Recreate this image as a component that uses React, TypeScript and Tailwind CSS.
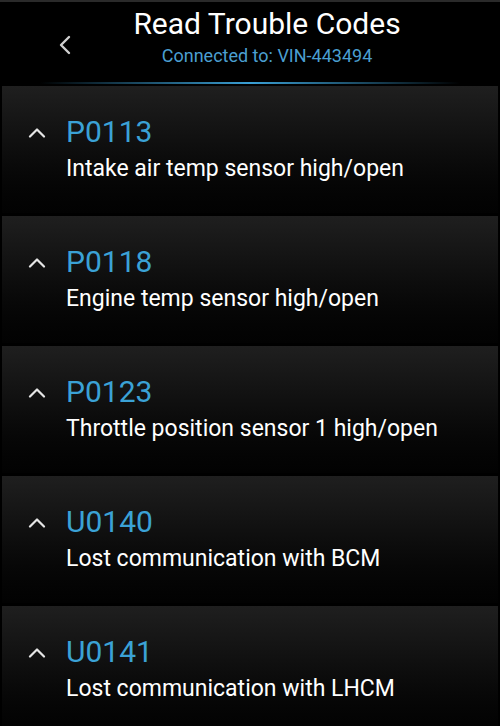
import React from "react";

interface Code {
  code: string;
  desc: string;
}

const codes: Code[] = [
  { code: "P0113", desc: "Intake air temp sensor high/open" },
  { code: "P0118", desc: "Engine temp sensor high/open" },
  { code: "P0123", desc: "Throttle position sensor 1 high/open" },
  { code: "U0140", desc: "Lost communication with BCM" },
  { code: "U0141", desc: "Lost communication with LHCM" },
];

const ChevronUp = () => (
  <svg width="18" height="10" viewBox="0 0 18 10" fill="none">
    <path d="M2 8.5 L9 1.5 L16 8.5" stroke="#e6e6e6" strokeWidth="2.2" strokeLinecap="round" strokeLinejoin="round" />
  </svg>
);

const CodeCard = ({ code, desc }: Code) => {
  return (
    <div className="mx-[2px] mb-[3px] h-[127px] bg-gradient-to-b from-[#1f1f1f] to-[#020202] pt-[29px]">
      <div className="flex items-center">
        <div className="flex w-[64px] justify-end pr-[20px] pt-[2px]">
          <ChevronUp />
        </div>
        <div className="text-[30px] leading-[34px] text-[#3ba2d6]">{code}</div>
      </div>
      <div className="pl-[64px] pt-[6px] text-[23px] leading-[27px] text-white">{desc}</div>
    </div>
  );
};

const App = () => {
  return (
    <div className="h-[726px] w-[500px] overflow-hidden bg-black" style={{ fontFamily: "Roboto, 'Noto Sans', sans-serif" }}>
      <div className="h-[2px] bg-[#2a2a2a]" />
      <div className="relative flex h-[80px] flex-col items-center pl-[34px]">
        <div className="absolute left-[58px] top-[33px]">
          <svg width="14" height="20" viewBox="0 0 14 20" fill="none">
            <path d="M11 2 L3 10 L11 18" stroke="#d0d0d0" strokeWidth="2.4" strokeLinecap="round" strokeLinejoin="round" />
          </svg>
        </div>
        <div className="pt-[4px] text-[30px] leading-[36px] text-white">Read Trouble Codes</div>
        <div className="pt-[3px] text-[18px] leading-[22px] text-[#4b9fd1]">Connected to: VIN-443494</div>
      </div>
      <div className="mx-[40px] h-[2px] bg-gradient-to-r from-transparent via-[#3a9fd4] to-transparent" />
      <div className="h-[2px]" />
      {codes.map((c) => (
        <CodeCard key={c.code} code={c.code} desc={c.desc} />
      ))}
    </div>
  );
};

export default App;
